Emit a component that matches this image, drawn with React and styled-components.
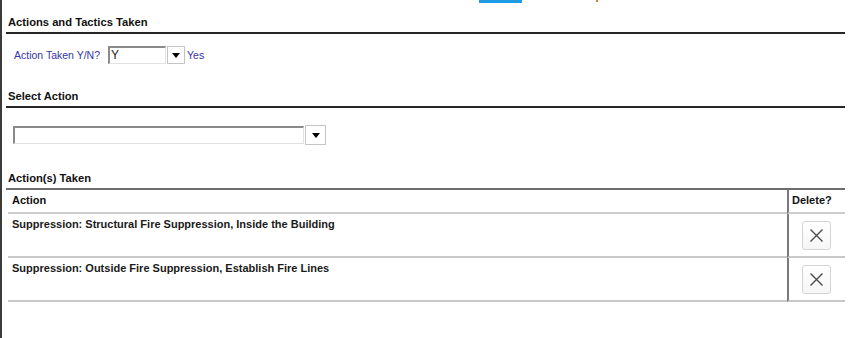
import React from 'react'
import styled, { createGlobalStyle } from 'styled-components'

const GlobalStyle = createGlobalStyle`
  html, body {
    margin: 0;
    padding: 0;
    background: #fff;
  }
  body {
    font-family: "Liberation Sans", Arial, sans-serif;
    color: #000;
  }
`

const Page = styled.div`
  height: 338px;
  box-sizing: border-box;
  border-left: 2px solid #3a3a3a;
  padding: 0 5px 0 4px;
  overflow: hidden;
`

const TabStrip = styled.div`
  height: 12px;
  display: flex;
  align-items: flex-start;
`

const TabIndicator = styled.span`
  display: block;
  margin-left: 473px;
  width: 43px;
  height: 3px;
  background: #1f9be6;
`

const TabMark = styled.span`
  display: block;
  margin-left: 74px;
  width: 2px;
  height: 2px;
  background: #c8884a;
`

const SectionTitle = styled.div`
  height: 20px;
  line-height: 20px;
  margin-top: ${p => p.$gap}px;
  padding-left: 2px;
  font-size: 11.2px;
  font-weight: bold;
  color: #111;
  border-bottom: 2px solid ${p => (p.$soft ? '#6e6e6e' : '#262626')};
`

const FieldRow = styled.div`
  display: flex;
  align-items: center;
  margin-top: ${p => p.$gap}px;
  padding-left: ${p => p.$indent}px;
  height: 20px;
`

const Label = styled.span`
  font-size: 10.5px;
  color: #3434a8;
  width: 94px;
`

const ValueText = styled.span`
  font-size: 10.5px;
  color: #3434a8;
  margin-left: 2px;
`

const TextBox = styled.div`
  box-sizing: border-box;
  width: ${p => p.$w}px;
  height: 18px;
  border-top: 2px solid #8a8a8a;
  border-left: 2px solid #8a8a8a;
  border-right: 1px solid #e2e2e2;
  border-bottom: 1px solid #e2e2e2;
  background: #fff;
  font-size: 12px;
  line-height: 15px;
  padding-left: 1px;
  color: #222;
`

const DropButton = styled.div`
  box-sizing: border-box;
  width: ${p => p.$w}px;
  height: ${p => p.$h}px;
  margin-left: 1px;
  border: 1px solid #c4c4c4;
  background: #fff;
  display: flex;
  align-items: center;
  justify-content: center;
`

const Caret = styled.span`
  width: 0;
  height: 0;
  border-left: 4px solid transparent;
  border-right: 4px solid transparent;
  border-top: 5px solid #000;
`

const Table = styled.div`
  display: grid;
  grid-template-columns: 1fr 58px;
  margin-left: 2px;
`

const HeadCell = styled.div`
  height: 22px;
  line-height: 20px;
  font-size: 11px;
  font-weight: bold;
  color: #111;
  padding-left: ${p => (p.$delete ? 3 : 4)}px;
  border-bottom: 2px solid #cdcdcd;
  border-left: ${p => (p.$delete ? '2px solid #7a7a7a' : 'none')};
`

const BodyCell = styled.div`
  height: 44px;
  box-sizing: border-box;
  padding: 4px 0 0 4px;
  font-size: 11px;
  font-weight: bold;
  color: #1a1a1a;
  border-bottom: 2px solid #c8c8c8;
`

const DeleteCell = styled.div`
  height: 44px;
  box-sizing: border-box;
  border-left: 2px solid #7a7a7a;
  border-bottom: 2px solid #c8c8c8;
  display: flex;
  align-items: center;
  justify-content: center;
  padding-right: 2px;
`

const DeleteButton = styled.button`
  width: 29px;
  height: 29px;
  padding: 0;
  border: 1px solid #d4d4d4;
  border-radius: 3px;
  background: linear-gradient(#ffffff, #f6f6f6);
  display: flex;
  align-items: center;
  justify-content: center;
  cursor: pointer;
`

const CloseIcon = () => (
  <svg width="15" height="15" viewBox="0 0 15 15">
    <path d="M1.5 1.5 L13.5 13.5 M13.5 1.5 L1.5 13.5" stroke="#4a4a4a" strokeWidth="1.4" fill="none" />
  </svg>
)

const actions = [
  'Suppression: Structural Fire Suppression, Inside the Building',
  'Suppression: Outside Fire Suppression, Establish Fire Lines',
]

export default function App() {
  return (
    <>
      <GlobalStyle />
      <Page>
        <TabStrip>
          <TabIndicator />
          <TabMark />
        </TabStrip>

        <SectionTitle $gap={0}>Actions and Tactics Taken</SectionTitle>
        <FieldRow $gap={11} $indent={8}>
          <Label>Action Taken Y/N?</Label>
          <TextBox $w={58}>Y</TextBox>
          <DropButton $w={18} $h={18}><Caret /></DropButton>
          <ValueText>Yes</ValueText>
        </FieldRow>

        <SectionTitle $gap={21}>Select Action</SectionTitle>
        <FieldRow $gap={17} $indent={7}>
          <TextBox $w={291} />
          <DropButton $w={21} $h={20}><Caret /></DropButton>
        </FieldRow>

        <SectionTitle $gap={23} $soft>Action(s) Taken</SectionTitle>
        <Table>
          <HeadCell>Action</HeadCell>
          <HeadCell $delete>Delete?</HeadCell>
          {actions.map(a => (
            <React.Fragment key={a}>
              <BodyCell>{a}</BodyCell>
              <DeleteCell>
                <DeleteButton aria-label="Delete"><CloseIcon /></DeleteButton>
              </DeleteCell>
            </React.Fragment>
          ))}
        </Table>
      </Page>
    </>
  )
}
